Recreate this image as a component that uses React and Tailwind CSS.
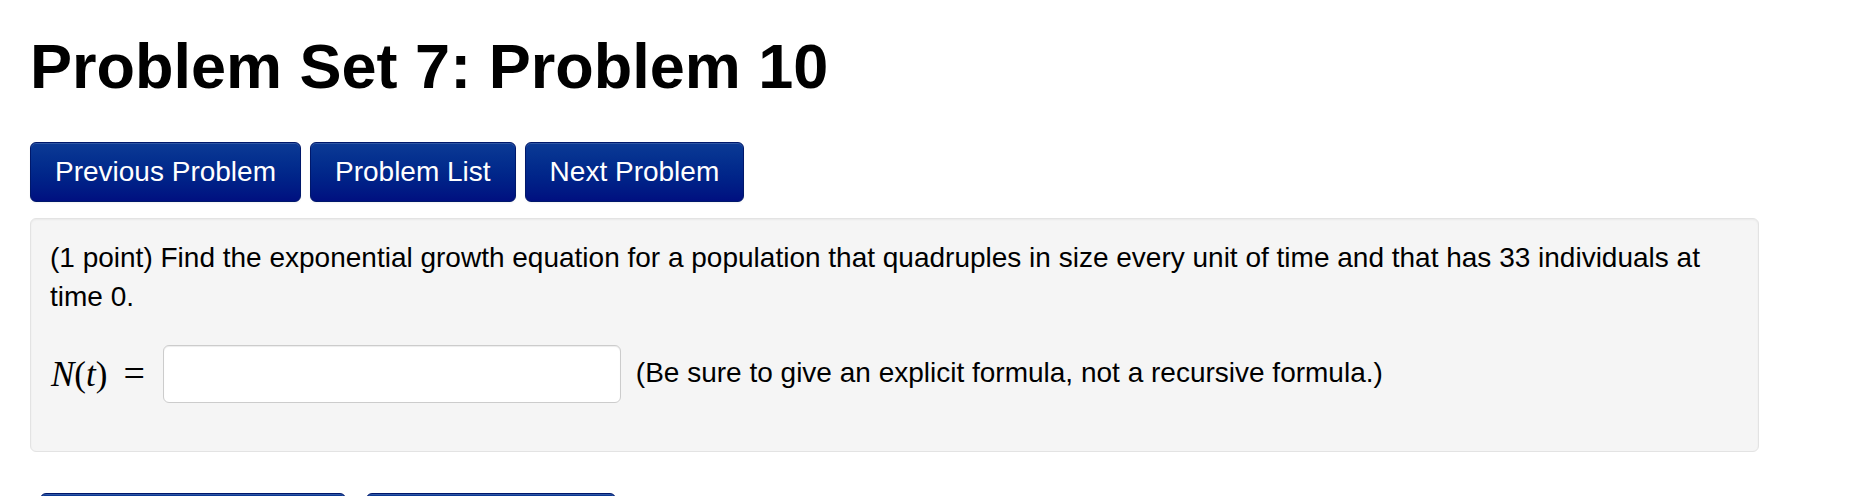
import React from "react";

const font = { fontFamily: '"Liberation Sans", Arial, Helvetica, sans-serif' };

function NavButton({ children, className = "", label }) {
  return (
    <button
      type="button"
      aria-label={label}
      className={
        "h-[60px] px-[24px] flex items-center justify-center rounded-[6px] border border-[#00186b] bg-linear-to-b from-[#0c3a95] to-[#000f80] text-white text-[28px] leading-[40px] shadow-[inset_0_1px_0_rgba(255,255,255,0.15),0_1px_2px_rgba(0,0,0,0.05)] whitespace-nowrap " +
        className
      }
    >
      {children}
    </button>
  );
}

export default function App() {
  return (
    <div className="bg-white min-h-[496px] overflow-hidden" style={font}>
      <div className="pl-[30px] pt-[32px] w-[1759px]">
        <h1 className="text-[63px] font-bold leading-[69px] text-black">
          Problem Set 7: Problem 10
        </h1>

        <div className="mt-[41px] flex gap-[9px]">
          <NavButton>Previous Problem</NavButton>
          <NavButton>Problem List</NavButton>
          <NavButton>Next Problem</NavButton>
        </div>

        <div className="mt-[16px] w-[1729px] rounded-[6px] border border-[#e3e3e3] bg-[#f5f5f5] shadow-[inset_0_1px_2px_rgba(0,0,0,0.05)] px-[19px] pt-[19px] pb-[48px] text-black">
          <p className="text-[28px] leading-[39.2px]">
            (1 point) Find the exponential growth equation for a population that
            quadruples in size every unit of time and that has 33 individuals at
            time 0.
          </p>

          <div className="mt-[29px] flex items-center">
            <span
              className="text-[35px] leading-[40px] whitespace-nowrap pl-[1px]"
              style={{ fontFamily: '"Liberation Serif", "Times New Roman", serif' }}
            >
              <span className="italic">N</span>
              <span>(</span>
              <span className="italic">t</span>
              <span>)</span>
              <span className="ml-[16px] text-[38px]">=</span>
            </span>
            <input
              type="text"
              aria-label="N(t)"
              className="ml-[18px] h-[58px] w-[458px] rounded-[6px] border border-[#cccccc] bg-white shadow-[inset_0_1px_1px_rgba(0,0,0,0.075)] outline-none px-[12px] text-[28px]"
            />
            <span className="ml-[15px] mb-[4px] text-[28px] leading-[39.2px] whitespace-nowrap">
              (Be sure to give an explicit formula, not a recursive formula.)
            </span>
          </div>
        </div>

        <div className="mt-[41px] ml-[10px] flex gap-[20px]">
          <NavButton className="w-[306px]" label="Preview My Answers" />
          <NavButton className="w-[250px]" label="Submit Answers" />
        </div>
      </div>
    </div>
  );
}
